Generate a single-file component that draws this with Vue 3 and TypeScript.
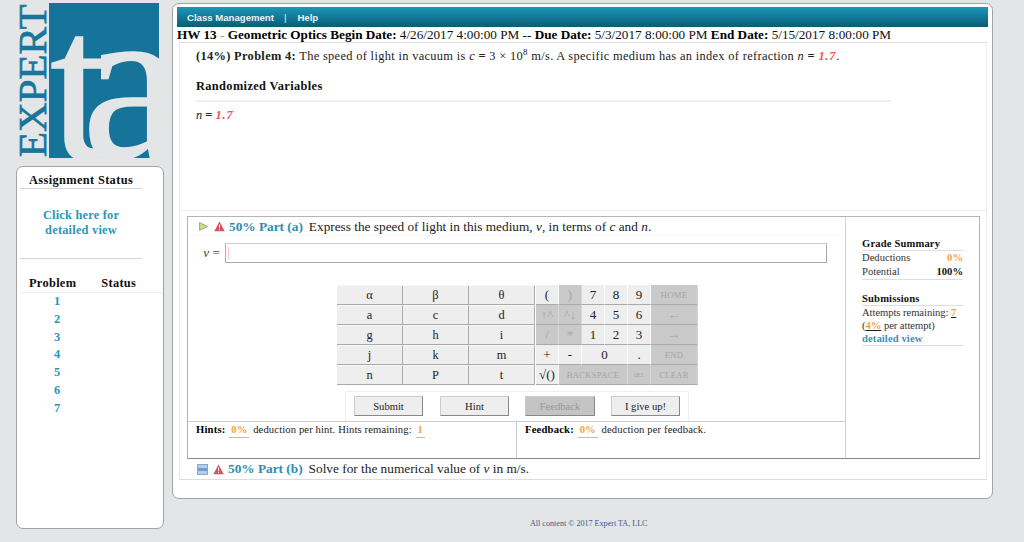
<script setup lang="ts">
const problems = [1, 2, 3, 4, 5, 6, 7]
const letters = ['α', 'β', 'θ', 'a', 'c', 'd', 'g', 'h', 'i', 'j', 'k', 'm', 'n', 'P', 't']
type Key = { t: string; off?: boolean; span?: number; small?: boolean; tiny?: boolean; arrow?: boolean }
const keys: Key[] = [
  { t: '(' }, { t: ')', off: true }, { t: '7' }, { t: '8' }, { t: '9' }, { t: 'HOME', off: true, span: 2, small: true },
  { t: '↑^', off: true }, { t: '^↓', off: true }, { t: '4' }, { t: '5' }, { t: '6' }, { t: '←', off: true, span: 2, arrow: true },
  { t: '/', off: true }, { t: '*', off: true }, { t: '1' }, { t: '2' }, { t: '3' }, { t: '→', off: true, span: 2, arrow: true },
  { t: '+' }, { t: '-' }, { t: '0', span: 2 }, { t: '.' }, { t: 'END', off: true, span: 2, small: true },
  { t: '√()' }, { t: 'BACKSPACE', off: true, span: 3, small: true }, { t: 'DEL', off: true, tiny: true }, { t: 'CLEAR', off: true, span: 2, small: true },
]
</script>

<template>
  <div class="page">
    <aside class="left">
      <div class="logo">
        <div class="expert">EXPERT</div>
        <div class="mark"><span class="mark-t">t</span><span class="mark-a">a</span></div>
      </div>
      <section class="status card">
        <h3 class="status-title">Assignment Status</h3>
        <a class="detail-link">Click here for<br />detailed view</a>
        <div class="status-head"><b>Problem</b><b>Status</b></div>
        <div v-for="p in problems" :key="p" class="problem-row">{{ p }}</div>
      </section>
    </aside>

    <div class="right">
      <main class="panel card">
        <nav class="nav"><span>Class Management</span><span class="pipe">|</span><span>Help</span></nav>
        <div class="hw">
          <b>HW 13 <span class="dash">-</span> Geometric Optics Begin Date:</b> 4/26/2017 4:00:00 PM -- <b>Due Date:</b> 5/3/2017 8:00:00 PM <b>End Date:</b> 5/15/2017 8:00:00 PM
        </div>
        <div class="content">
          <div class="question">
            <p class="statement"><b>(14%) Problem 4:</b> The speed of light in vacuum is <i>c</i> <b>=</b> 3 × 10<sup>8</sup> m/s. A specific medium has an index of refraction <i>n</i> <b>=</b> <b class="red">1.7</b>.</p>
            <h4 class="rv">Randomized Variables</h4>
            <p class="var"><i>n</i> <b>=</b> <b class="red">1.7</b></p>
          </div>

          <section class="part-box">
            <div class="part-main">
              <div class="part-head">
                <svg class="ico" width="11" height="11" viewBox="0 0 11 11"><path d="M1.5 1.5 L9.5 5.5 L1.5 9.5 Z" fill="#c4dc8c" stroke="#9dbb62" /></svg>
                <svg class="ico warn" width="11" height="11" viewBox="0 0 11 11"><path d="M5.5 .5 L10.7 10.2 H.3 Z" fill="#d9505c" /><path d="M5 3.6h1v3.6H5zM5 8h1v1H5z" fill="#fff" /></svg>
                <b class="part-label">50% Part (a)</b>
                <span class="part-text">Express the speed of light in this medium, <i>v</i>, in terms of <i>c</i> and <i>n</i>.</span>
              </div>
              <div class="answer">
                <span class="v-eq"><i>v</i> =</span>
                <div class="input"><span class="caret"></span></div>
              </div>
              <div class="keypad">
                <div class="letters">
                  <div v-for="l in letters" :key="l" class="lk">{{ l }}</div>
                </div>
                <div class="keys">
                  <div
                    v-for="(k, i) in keys"
                    :key="i"
                    class="nk"
                    :class="{ off: k.off, small: k.small, tiny: k.tiny }"
                    :style="k.span ? { gridColumn: 'span ' + k.span } : undefined"
                  >{{ k.t }}</div>
                </div>
              </div>
              <div class="actions">
                <button class="btn">Submit</button>
                <button class="btn">Hint</button>
                <button class="btn dis">Feedback</button>
                <button class="btn">I give up!</button>
              </div>
              <div class="foot">
                <div class="hints"><b>Hints:</b> <u class="o">0%</u> deduction per hint. Hints remaining: <u class="o">1</u></div>
                <div class="feedback"><b>Feedback:</b> <u class="o">0%</u> deduction per feedback.</div>
              </div>
            </div>
            <div class="summary">
              <h5 class="sum-title">Grade Summary</h5>
              <div class="sum-rows">
                <div class="sum-row"><span>Deductions</span><b class="or">0%</b></div>
                <div class="sum-row"><span>Potential</span><b>100%</b></div>
              </div>
              <h5 class="sub-title">Submissions</h5>
              <div class="sub-rows">
                <div>Attempts remaining: <u class="o2">7</u></div>
                <div>(<u class="o2">4%</u> per attempt)</div>
                <a class="sub-link">detailed view</a>
              </div>
            </div>
          </section>

          <div class="part-b">
            <svg class="ico" width="11" height="11" viewBox="0 0 11 11"><rect x=".5" y=".5" width="10" height="10" fill="#b6cde6" stroke="#8aa8c8" /><rect x="1" y="4" width="9" height="3" fill="#6f9fd0" /></svg>
            <svg class="ico warn" width="11" height="11" viewBox="0 0 11 11"><path d="M5.5 .5 L10.7 10.2 H.3 Z" fill="#d9505c" /><path d="M5 3.6h1v3.6H5zM5 8h1v1H5z" fill="#fff" /></svg>
            <b class="part-label">50% Part (b)</b>
            <span class="part-text">Solve for the numerical value of <i>v</i> in m/s.</span>
          </div>
        </div>
      </main>
      <footer class="copy">All content © 2017 Expert TA, LLC</footer>
    </div>
  </div>
</template>

<style>
html, body { margin: 0; background: #e4e5e7; }
</style>

<style scoped>
.page {
  display: flex;
  gap: 8px;
  width: 1024px;
  height: 542px;
  padding: 3px 0 0 16px;
  box-sizing: border-box;
  overflow: hidden;
  font-family: "Liberation Serif", serif;
  color: #111;
}
.card {
  background: #fff;
  border: 1px solid #a3a3a3;
  border-radius: 7px;
  box-sizing: border-box;
}
.left { width: 148px; display: flex; flex-direction: column; gap: 8px; }
.logo { display: flex; height: 155px; gap: 3px; padding-left: 3px; }
.expert {
  width: 27px;
  height: 155px;
  writing-mode: vertical-rl;
  transform: rotate(180deg);
  font-size: 41px;
  line-height: 27px;
  font-weight: 400;
  color: #17769a;
  text-align: center;
  white-space: nowrap;
  -webkit-text-stroke: .7px #17769a;
}
.mark {
  position: relative;
  width: 110px;
  height: 155px;
  background: #16739a;
  overflow: hidden;
}
.mark-t, .mark-a {
  position: absolute;
  color: #e4e5e7;
  font-family: "Liberation Serif", serif;
  line-height: 1;
  -webkit-text-stroke: 1.5px #e4e5e7;
}
.mark-t { left: 1px; top: -25px; font-size: 215px; }
.mark-a { left: 33px; top: -33px; font-size: 225px; }
.status { height: 363px; padding: 5px 0 0 0; }
.status-title { margin: 0 21px 0 3px; padding: 0 0 0 9px; font-size: 12.4px; letter-spacing: .35px; line-height: 16px; border-bottom: 1px solid #d4d4d4; color: #111; white-space: nowrap; }
.detail-link {
  display: block;
  margin: 19px 21px 0 3px;
  height: 50px;
  text-align: center;
  font-weight: 700;
  font-size: 12.4px;
  letter-spacing: .2px;
  line-height: 15px;
  color: #2b97b8;
  border-bottom: 1px solid #d4d4d4;
}
.status-head {
  display: flex;
  margin: 17px 0 0 3px;
  padding: 0 0 1px 9px;
  gap: 25px;
  font-size: 12.4px;
  line-height: 15px;
  letter-spacing: .3px;
  border-bottom: 1px solid #eee;
}
.problem-row {
  width: 80px;
  text-align: center;
  font-weight: 700;
  font-size: 12.4px;
  line-height: 17.8px;
  color: #2597bb;
}

.right { width: 821px; display: flex; flex-direction: column; }
.panel { height: 496px; padding: 3px 4px 0; }
.nav {
  height: 20px;
  display: flex;
  align-items: center;
  padding-left: 10px;
  background: linear-gradient(#1b98bb, #0a5c75);
  font-family: "Liberation Sans", sans-serif;
  font-size: 9.6px;
  font-weight: 700;
  color: #e8f2f6;
}
.pipe { margin: 0 11px 0 10px; font-weight: 400; }
.hw { height: 15px; font-size: 13.2px; line-height: 15px; white-space: nowrap; color: #111; }
.hw b { color: #000; }
.dash { color: #999; font-weight: 400; }
.content {
  margin: 0 1px 0 2px;
  border: 1px solid #ddd;
  box-sizing: border-box;
  height: 438px;
  border-right-color: #eee;
  border-left-color: #e8e8e8;
}
.question { height: 162px; padding: 5px 95px 0 16px; border-bottom: 1px solid #eee; box-sizing: content-box; }
.statement { margin: 0; font-size: 12.4px; line-height: 16px; letter-spacing: .33px; white-space: nowrap; color: #222; }
.statement sup { font-size: 9px; line-height: 0; }
.rv { margin: 14px 0 0; padding-bottom: 6px; font-size: 12.4px; line-height: 16px; letter-spacing: .36px; border-bottom: 2px solid #eee; color: #111; }
.var { margin: 6px 0 0; font-size: 12.4px; line-height: 15px; color: #222; }
.red { color: #f9524f; font-style: italic; }
.statement .red, .var .red { letter-spacing: .8px; }

.part-box {
  display: flex;
  margin: 5px 6px 0 7px;
  height: 243px;
  border: 1px solid #b4b4b4;
  border-bottom-color: #888;
  box-sizing: border-box;
}
.part-main { width: 657px; border-right: 1px solid #d0d0d0; display: flex; flex-direction: column; }
.part-head {
  height: 19px;
  display: flex;
  align-items: center;
  padding: 1px 0 0 10px;
  border-bottom: 1px solid #f6f6f6;
  box-sizing: border-box;
  white-space: nowrap;
}
.ico { flex: none; margin-right: 5px; }
.warn { margin-right: 4px; }
.part-label { font-size: 13.3px; color: #2a8fb2; margin-right: 6px; }
.part-text { font-size: 13.3px; color: #222; }
.answer { display: flex; align-items: center; height: 20px; margin-top: 7px; padding-left: 13px; }
.v-eq { width: 24px; font-size: 13.3px; color: #444; text-align: right; padding-right: 5px; box-sizing: border-box; white-space: nowrap; }
.input {
  width: 602px;
  height: 20px;
  box-sizing: border-box;
  border: 1px solid #aaa;
  border-top-color: #ccc;
  display: flex;
  align-items: center;
  padding-left: 2px;
}
.caret { width: 1px; height: 12px; background: #fbc4d0; }
.keypad { display: flex; gap: 1px; margin: 22px 0 0 149px; height: 100px; }
.letters { display: grid; grid-template-columns: 66px 66px 66px; grid-auto-rows: 20px; width: 198px; }
.lk {
  display: flex;
  align-items: center;
  justify-content: center;
  background: #eee;
  border-right: 1px solid #aaa;
  border-bottom: 1px solid #aaa;
  border-top: 1px solid #f8f8f8;
  box-sizing: border-box;
  font-size: 12.4px;
  color: #222;
}
.keys { display: grid; grid-template-columns: repeat(5, 23px) 24px 23px; grid-auto-rows: 20px; width: 162px; }
.nk {
  display: flex;
  align-items: center;
  justify-content: center;
  background: #eee;
  border-right: 1px solid #fff;
  border-bottom: 1px solid #aaa;
  box-sizing: border-box;
  font-size: 13px;
  color: #222;
  white-space: nowrap;
  overflow: hidden;
}
.nk.off { background: #c9c9c9; color: #a5a5a5; border-right-color: #d8d8d8; }
.nk.small { font-size: 8.6px; letter-spacing: .3px; }
.nk.tiny { font-size: 5.5px; }
.actions {
  display: flex;
  gap: 17px;
  align-self: flex-start;
  width: 344px;
  height: 30px;
  margin: 6px 0 0 157px;
  padding: 4px 0 0 8px;
  box-sizing: border-box;
  border: 1px solid #eee;
  border-bottom: 0;
}
.btn {
  width: 69px;
  height: 20px;
  padding: 0;
  background: #eee;
  border: 1px solid #aaa;
  border-right-color: #888;
  border-bottom-color: #888;
  border-top-color: #ccc;
  border-left-color: #ccc;
  font-family: "Liberation Serif", serif;
  font-size: 10.6px;
  color: #222;
  flex: none;
}
.btn.dis { background: #c4c4c4; color: #999; width: 70px; margin-left: -1px; margin-right: -1px; }
.foot { flex: 1; display: flex; border-top: 1px solid #ccc; font-size: 10.6px; color: #222; white-space: nowrap; }
.hints { width: 329px; padding: 1px 0 0 8px; border-right: 1px solid #ccc; box-sizing: border-box; line-height: 13px; letter-spacing: .13px; }
.feedback { padding: 1px 0 0 8px; line-height: 13px; letter-spacing: .13px; }
.foot b { color: #000; letter-spacing: .2px; }
.o { color: #f9a23c; font-weight: 700; text-decoration: none; border-bottom: 1px solid #bbb; padding: 0 2px 2px; margin: 0 1px; display: inline-block; line-height: 11px; }
.summary { flex: 1; padding: 20px 16px 0; font-size: 10.6px; color: #333; min-width: 0; }
.sum-title, .sub-title { margin: 0; font-size: 10.6px; line-height: 13px; letter-spacing: .15px; color: #111; }
.sum-title { border-bottom: 1px solid #ddd; }
.sum-rows { border-bottom: 1px solid #ddd; padding-bottom: 1px; }
.sum-row { display: flex; justify-content: space-between; line-height: 13.5px; }
.sum-row b { color: #111; }
.sum-row .or { color: #f9a23c; }
.sub-title { margin-top: 12px; }
.sub-rows { line-height: 13px; border-top: 1px solid #ddd; border-bottom: 1px solid #ddd; white-space: nowrap; letter-spacing: -.05px; }
.o2 { color: #f9a23c; font-weight: 700; text-decoration-color: #222; }
.sub-link { display: block; color: #2f97b8; font-weight: 700; letter-spacing: .1px; }
.part-b { display: flex; align-items: center; height: 20px; padding-left: 17px; white-space: nowrap; }
.copy { margin-top: 19px; padding-left: 358px; font-size: 8.1px; line-height: 12px; color: #3a5a8c; white-space: nowrap; }
</style>
